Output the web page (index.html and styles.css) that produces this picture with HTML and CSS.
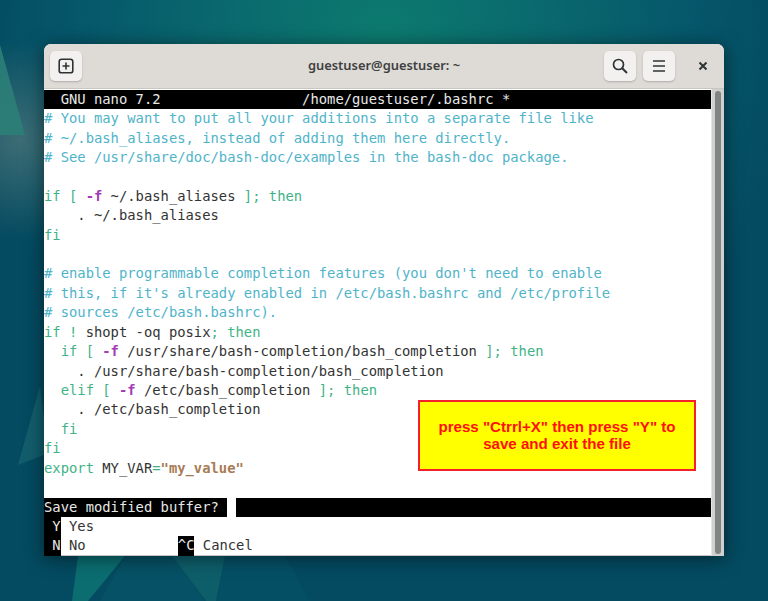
FILE: index.html
```html
<!DOCTYPE html>
<html lang="en">
<head>
<meta charset="utf-8">
<title>guestuser@guestuser: ~</title>
<link rel="stylesheet" href="styles.css">
</head>
<body>
<svg class="wallpaper" viewBox="0 0 768 601" preserveAspectRatio="none" aria-hidden="true">
  <defs>
    <radialGradient id="wall" gradientUnits="userSpaceOnUse" cx="384" cy="30" r="420">
      <stop offset="0" stop-color="#0c7a6e"/>
      <stop offset="0.35" stop-color="#0a6a6e"/>
      <stop offset="0.75" stop-color="#05566a"/>
      <stop offset="1" stop-color="#044a60"/>
    </radialGradient>
    <radialGradient id="glow" gradientUnits="userSpaceOnUse" cx="20" cy="140" r="100">
      <stop offset="0" stop-color="#6a8582" stop-opacity="0.55"/>
      <stop offset="1" stop-color="#6a8582" stop-opacity="0"/>
    </radialGradient>
  </defs>
  <rect width="768" height="601" fill="url(#wall)"/>
  <rect x="0" y="40" width="120" height="200" fill="url(#glow)"/>
  <polygon points="0,45 25,135 0,135" fill="#2c7f78" opacity="0.9"/>
  <polygon points="18,465 44,455 44,420 40,386" fill="#1c6a75" opacity="0.6"/>
  <polygon points="78,556 125,556 88,601 72,601" fill="#0b6d70"/>
  <polygon points="125,556 172,556 205,601 100,601" fill="#07586a" opacity="0.5"/>
  <polygon points="172,556 225,556 216,601 206,601" fill="#0e5e6a"/>
  <polygon points="225,556 285,556 310,601 216,601" fill="#06546a" opacity="0.5"/>
</svg>
<main class="window">
  <header class="titlebar">
    <div class="side">
      <button class="btn" aria-label="New tab">
        <svg width="16" height="16" viewBox="0 0 16 16"><rect x="1.2" y="1.2" width="13.6" height="13.6" rx="2.4" fill="none" stroke="#2e3436" stroke-width="1.6"/><path d="M8 4.5v7M4.5 8h7" stroke="#2e3436" stroke-width="1.6" fill="none"/></svg>
      </button>
    </div>
    <h1 class="title">guestuser@guestuser: ~</h1>
    <div class="side end">
      <button class="btn" aria-label="Search">
        <svg width="16" height="16" viewBox="0 0 16 16"><circle cx="6.5" cy="6.5" r="5" fill="none" stroke="#2e3436" stroke-width="1.7"/><path d="M10.2 10.2L15 15" stroke="#2e3436" stroke-width="2" fill="none"/></svg>
      </button>
      <button class="btn" aria-label="Menu">
        <svg width="16" height="16" viewBox="0 0 16 16"><path d="M2 3h12M2 8h12M2 13h12" stroke="#2e3436" stroke-width="1.6" fill="none"/></svg>
      </button>
      <button class="close" aria-label="Close">
        <svg width="10" height="10" viewBox="0 0 10 10"><path d="M1.5 1.5l7 7M8.5 1.5l-7 7" stroke="#2e3436" stroke-width="2" fill="none"/></svg>
      </button>
    </div>
  </header>
  <div class="body">
    <div class="terminal">
      <div class="row inv">  GNU nano 7.2                 /home/guestuser/.bashrc *</div>
      <div class="row c"># You may want to put all your additions into a separate file like</div>
      <div class="row c"># ~/.bash_aliases, instead of adding them here directly.</div>
      <div class="row c"># See /usr/share/doc/bash-doc/examples in the bash-doc package.</div>
      <div class="row"></div>
      <div class="row"><span class="k">if [ </span><span class="f">-f</span> ~/.bash_aliases <span class="k">]; then</span></div>
      <div class="row">    . ~/.bash_aliases</div>
      <div class="row k">fi</div>
      <div class="row"></div>
      <div class="row c"># enable programmable completion features (you don't need to enable</div>
      <div class="row c"># this, if it's already enabled in /etc/bash.bashrc and /etc/profile</div>
      <div class="row c"># sources /etc/bash.bashrc).</div>
      <div class="row"><span class="k">if !</span> shopt -oq posix<span class="k">; then</span></div>
      <div class="row">  <span class="k">if [ </span><span class="f">-f</span> /usr/share/bash-completion/bash_completion <span class="k">]; then</span></div>
      <div class="row">    . /usr/share/bash-completion/bash_completion</div>
      <div class="row">  <span class="k">elif [ </span><span class="f">-f</span> /etc/bash_completion <span class="k">]; then</span></div>
      <div class="row">    . /etc/bash_completion</div>
      <div class="row k">  fi</div>
      <div class="row k">fi</div>
      <div class="row"><span class="k">export</span> MY_VAR<span class="k">=</span><span class="s">"my_value"</span></div>
      <div class="row"></div>
      <div class="row prompt"><span class="inv cell">Save modified buffer? </span><span class="inv rest"> </span></div>
      <div class="row"><span class="inv cell"> Y</span> Yes</div>
      <div class="row"><span class="inv cell"> N</span> No<span class="gap"></span><span class="inv cell">^C</span> Cancel</div>
      <aside class="callout">press "Ctrrl+X" then press "Y" to<br>save and exit the file</aside>
    </div>
    <div class="scrollbar"><div class="thumb"></div></div>
  </div>
</main>
</body>
</html>
```
FILE: styles.css
```css
* { box-sizing: border-box; }
html, body { margin: 0; height: 100%; overflow: hidden; }
body {
  width: 768px;
  height: 601px;
  padding: 44px;
  position: relative;
  background: #044a60;
}
.wallpaper { position: absolute; inset: 0; width: 768px; height: 601px; display: block; }
.window {
  position: relative;
  width: 680px;
  height: 512px;
  border-radius: 7px 7px 0 0;
  overflow: hidden;
  background: #fff;
  box-shadow: 0 2px 18px rgba(0, 0, 0, .5);
  display: flex;
  flex-direction: column;
}
.titlebar {
  height: 45px;
  flex: none;
  display: grid;
  grid-template-columns: 1fr auto 1fr;
  align-items: center;
  padding: 0 6px 1px;
  background: #dedbd7;
  border-bottom: 1px solid #c9c5c0;
}
.side { display: flex; align-items: center; gap: 7px; }
.side.end { justify-content: flex-end; }
.btn, .close {
  border: 0;
  padding: 0;
  display: flex;
  align-items: center;
  justify-content: center;
}
.btn {
  width: 32px;
  height: 30px;
  border-radius: 5px;
  background: #f3f1ef;
  box-shadow: 0 1px 2px rgba(0, 0, 0, .22);
}
.close {
  width: 30px;
  height: 30px;
  margin-left: 6px;
  background: transparent;
}
.title {
  margin: 0;
  font: 600 12.9px/1 "Noto Sans", sans-serif;
  color: #3d3f41;
}
.body { flex: 1; display: flex; min-height: 0; }
.terminal {
  position: relative;
  flex: 1;
  padding-top: 0.7px;
  background: #fff;
  font: 13.84px/19.43px "DejaVu Sans Mono", monospace;
  color: #333;
  border-bottom: 1px solid #c4c4c2;
}
.row { height: 19.43px; white-space: pre; }
.inv { background: #000; color: #e8e8e8; }
.cell { display: inline-block; height: 19.43px; vertical-align: top; }
.prompt { display: flex; }
.rest { flex: 1; margin-left: 8.5px; }
.gap { display: inline-block; width: 92.2px; }
.c { color: #4fb4c9; }
.k { color: #3fb386; }
.f { color: #a43ab5; font-weight: 700; }
.s { color: #a87b55; font-weight: 700; }
.callout {
  position: absolute;
  left: 374px;
  top: 311px;
  width: 278px;
  height: 71px;
  padding-top: 16px;
  border: 2px solid #f5202a;
  background: #ffff00;
  color: #ff1010;
  font: 700 15.1px/17px "Liberation Sans", Arial, sans-serif;
  text-align: center;
  white-space: normal;
}
.scrollbar {
  width: 13px;
  flex: none;
  background: #d0d0ce;
  padding: 2px 3px 2px 3px;
  border-left: 1px solid #e4e4e2;
}
.thumb { height: 100%; border-radius: 4px; background: #808485; }
```
